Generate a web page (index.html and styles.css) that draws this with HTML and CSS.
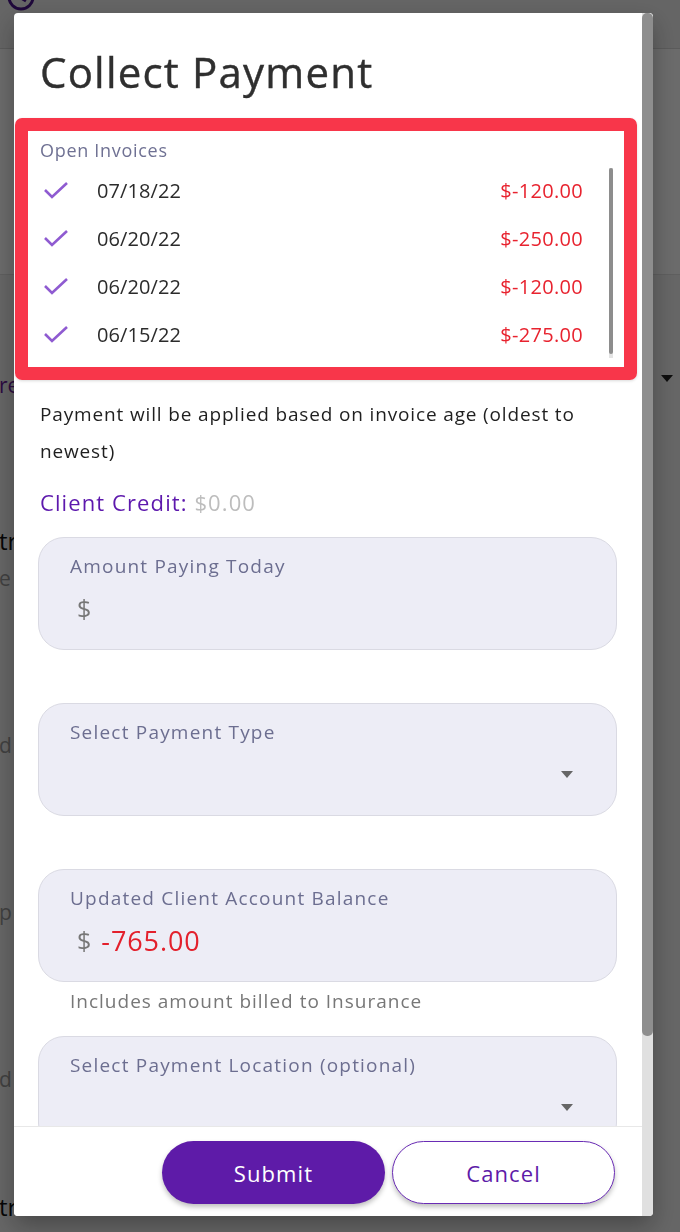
FILE: index.html
```html
<!DOCTYPE html>
<html lang="en">
<head>
<meta charset="utf-8">
<title>Collect Payment</title>
<link rel="stylesheet" href="styles.css">
</head>
<body>
<div class="page">
  <div class="bg-header">
    <svg class="bg-logo" width="32" height="32" viewBox="0 0 32 32"><circle cx="16" cy="16" r="12" fill="none" stroke="#4a148c" stroke-width="3"/><path d="M16 9v8l5 3" fill="none" stroke="#4a148c" stroke-width="3"/></svg>
  </div>
  <div class="bg-hero"></div>
  <div class="bg-body">
    <div class="bg-row bg-row-a"><span class="bg-purple">re</span><span class="bg-caret"></span></div>
    <div class="bg-row bg-row-b"><span class="bg-dark">tr</span></div>
    <div class="bg-row bg-row-c"><span class="bg-gray">e</span></div>
    <div class="bg-row bg-row-d"><span class="bg-gray">d</span></div>
    <div class="bg-row bg-row-d2"><span class="bg-gray">p</span></div>
    <div class="bg-row bg-row-d2"><span class="bg-gray">d</span></div>
    <div class="bg-row bg-row-e"><span class="bg-dark">tr</span></div>
  </div>
</div>

<div class="overlay">
  <div class="modal">
    <div class="modal-main">
      <div class="modal-body">
        <h2 class="title">Collect Payment</h2>

        <div class="invoices">
          <div class="inv-label">Open Invoices</div>
          <div class="inv-list">
            <div class="inv-row">
              <svg class="check" width="24" height="18" viewBox="0 0 24 18"><polyline points="1,9 8,16 23,2" fill="none" stroke="#8f5bd1" stroke-width="2.6"/></svg>
              <span class="inv-date">07/18/22</span>
              <span class="inv-amt">$-120.00</span>
            </div>
            <div class="inv-row">
              <svg class="check" width="24" height="18" viewBox="0 0 24 18"><polyline points="1,9 8,16 23,2" fill="none" stroke="#8f5bd1" stroke-width="2.6"/></svg>
              <span class="inv-date">06/20/22</span>
              <span class="inv-amt">$-250.00</span>
            </div>
            <div class="inv-row">
              <svg class="check" width="24" height="18" viewBox="0 0 24 18"><polyline points="1,9 8,16 23,2" fill="none" stroke="#8f5bd1" stroke-width="2.6"/></svg>
              <span class="inv-date">06/20/22</span>
              <span class="inv-amt">$-120.00</span>
            </div>
            <div class="inv-row">
              <svg class="check" width="24" height="18" viewBox="0 0 24 18"><polyline points="1,9 8,16 23,2" fill="none" stroke="#8f5bd1" stroke-width="2.6"/></svg>
              <span class="inv-date">06/15/22</span>
              <span class="inv-amt">$-275.00</span>
            </div>
            <div class="inv-scroll"><div class="inv-thumb"></div></div>
          </div>
        </div>

        <p class="note">Payment will be applied based on invoice age (oldest to newest)</p>

        <div class="credit"><span class="credit-label">Client Credit:</span> <span class="credit-val">$0.00</span></div>

        <div class="field field-first">
          <div class="field-label">Amount Paying Today</div>
          <div class="field-value"><span class="cur">$</span></div>
        </div>

        <div class="field field-gap">
          <div class="field-label">Select Payment Type</div>
          <div class="field-value field-select"><span></span><span class="caret"></span></div>
        </div>

        <div class="field field-gap">
          <div class="field-label">Updated Client Account Balance</div>
          <div class="field-value"><span class="cur">$</span><span class="neg">-765.00</span></div>
        </div>
        <div class="helper">Includes amount billed to Insurance</div>

        <div class="field field-last">
          <div class="field-label">Select Payment Location (optional)</div>
          <div class="field-value field-select"><span></span><span class="caret"></span></div>
        </div>
      </div>
      <div class="modal-footer">
        <button class="btn btn-primary">Submit</button>
        <button class="btn btn-outline">Cancel</button>
      </div>
    </div>
    <div class="modal-scroll"><div class="modal-thumb"></div></div>
  </div>
</div>
</body>
</html>
```

FILE: styles.css
```css
* { box-sizing: border-box; }
html, body { margin: 0; padding: 0; }
body {
  width: 680px;
  height: 1232px;
  overflow: hidden;
  font-family: "Open Sans", "Noto Sans", sans-serif;
  background: #f3f3f3;
}

/* ---- background page ---- */
.page { width: 680px; height: 1232px; overflow: hidden; }
.bg-header {
  height: 49px;
  display: flex;
  align-items: flex-start;
  background: #f1f1f1;
  border-bottom: 1px solid #d8d8d8;
}
.bg-logo { display: block; margin-left: 5px; margin-top: -19px; }
.bg-hero { height: 226px; background: #ffffff; border-bottom: 1px solid #e2e2e2; }
.bg-body { background: #f3f3f3; display: flow-root; }
.bg-row {
  height: 30px;
  display: flex;
  align-items: center;
  justify-content: space-between;
  white-space: nowrap;
}
.bg-row-a { margin-top: 95px; }
.bg-row-b { margin-top: 125px; }
.bg-row-c { margin-top: 8px; }
.bg-row-d { margin-top: 137px; }
.bg-row-d2 { margin-top: 137px; }
.bg-row-e { margin-top: 97px; }
.bg-purple { color: #6a1b9a; font-size: 21px; margin-left: -1px; }
.bg-dark { color: #111; font-size: 24px; margin-left: -1px; }
.bg-gray { color: #9a9a9a; font-size: 21px; margin-left: -1px; }
.bg-caret {
  width: 0; height: 0;
  border-left: 6px solid transparent;
  border-right: 6px solid transparent;
  border-top: 7px solid #222;
  margin-right: 7px;
  margin-top: -14px;
}

/* ---- overlay + modal ---- */
.overlay {
  position: fixed;
  inset: 0;
  background: rgba(0, 0, 0, 0.58);
  display: flex;
  padding: 13px 27px 16px 14px;
}
.modal {
  flex: 1;
  display: flex;
  background: #fff;
  border-radius: 4px;
  overflow: hidden;
  box-shadow: 0 10px 24px rgba(0,0,0,0.3);
}
.modal-main {
  width: 628px;
  display: flex;
  flex-direction: column;
}
.modal-scroll {
  width: 11px;
  background: #e0e0e0;
}
.modal-thumb {
  height: 1023px;
  background: #8e8e8e;
  border-radius: 5px;
}
.modal-body {
  flex: 1;
  overflow: hidden;
  padding: 0 25px 0 24px;
}
.title {
  margin: 0 0 22px 0;
  padding: 35px 0 0 2px;
  font-size: 42px;
  line-height: 48px;
  font-weight: 500;
  letter-spacing: 1.2px;
  color: #2f2f2f;
  -webkit-text-stroke: 0.4px #2f2f2f;
}

/* invoices */
.invoices {
  margin: 0 -20px 0 -23px;
  height: 262px;
  border: 13px solid #f8364a;
  border-radius: 7px;
  padding: 8px 0 9px;
  box-shadow: 0 1px 3px rgba(0,0,0,0.15);
}
.inv-label {
  padding-left: 12px;
  line-height: 22px;
  height: 22px;
  margin-bottom: 5px;
  font-size: 18px;
  letter-spacing: 0.7px;
  color: #6f7193;
}
.inv-list {
  position: relative;
  height: 192px;
  overflow: hidden;
}
.inv-row {
  height: 48px;
  display: flex;
  align-items: center;
  padding: 0 41px 0 16px;
}
.check { display: block; flex: none; }
.inv-date {
  margin-left: 29px;
  font-size: 20px;
  letter-spacing: 0.1px;
  color: #2b2b2b;
}
.inv-amt {
  margin-left: auto;
  font-size: 20px;
  letter-spacing: 0.3px;
  color: #e8232f;
}
.inv-scroll {
  position: absolute;
  right: 11px;
  top: 2px;
  width: 4px;
  height: 190px;
  background: #e4e4e4;
}
.inv-thumb {
  height: 186px;
  background: #8d8d8d;
  border-radius: 2px;
}

/* text */
.note {
  margin: 16px 0 0 0;
  padding-left: 2px;
  font-size: 19px;
  line-height: 37px;
  letter-spacing: 0.85px;
  color: #1f1f1f;
}
.credit {
  margin-top: 17px;
  padding-left: 2px;
  line-height: 30px;
  font-size: 22px;
  letter-spacing: 1.1px;
}
.credit-label { color: #5d18ad; }
.credit-val { color: #bdbdbd; }

/* fields */
.field {
  height: 113px;
  border: 1px solid #dadae3;
  border-radius: 26px;
  background: #ededf6;
  padding: 17px 0 0 31px;
}
.field-first { margin-top: 20px; }
.field-gap { margin-top: 53px; }
.field-last { margin-top: 23px; }
.field-label {
  line-height: 22px;
  height: 22px;
  font-size: 19px;
  letter-spacing: 1.2px;
  color: #6c6e90;
}
.field-value {
  margin-top: 16px;
  height: 30px;
  display: flex;
  align-items: center;
  padding-left: 7px;
}
.field-select {
  justify-content: space-between;
  padding-right: 43px;
}
.cur {
  font-size: 25px;
  color: #777777;
}
.neg {
  margin-left: 10px;
  font-size: 27px;
  letter-spacing: 0.9px;
  color: #e3202c;
}
.caret {
  width: 0; height: 0;
  border-left: 6px solid transparent;
  border-right: 6px solid transparent;
  border-top: 7px solid #666;
}
.helper {
  margin-top: 7px;
  padding-left: 32px;
  line-height: 24px;
  font-size: 19px;
  letter-spacing: 1px;
  color: #777777;
}

/* footer */
.modal-footer {
  flex: none;
  height: 90px;
  border-top: 1px solid #e8e8e8;
  display: flex;
  justify-content: flex-end;
  align-items: flex-start;
  gap: 7px;
  padding: 14px 27px 0 0;
  background: #fff;
}
.btn {
  width: 223px;
  height: 63px;
  border-radius: 32px;
  font-family: "Open Sans", "Noto Sans", sans-serif;
  font-size: 22px;
  letter-spacing: 1.1px;
  cursor: pointer;
  box-shadow: 0 3px 5px rgba(0,0,0,0.25);
}
.btn-primary {
  background: #5e1ba8;
  color: #ffffff;
  border: none;
}
.btn-outline {
  background: #ffffff;
  color: #5e1ba8;
  border: 1.5px solid #6a2cb5;
}
```
